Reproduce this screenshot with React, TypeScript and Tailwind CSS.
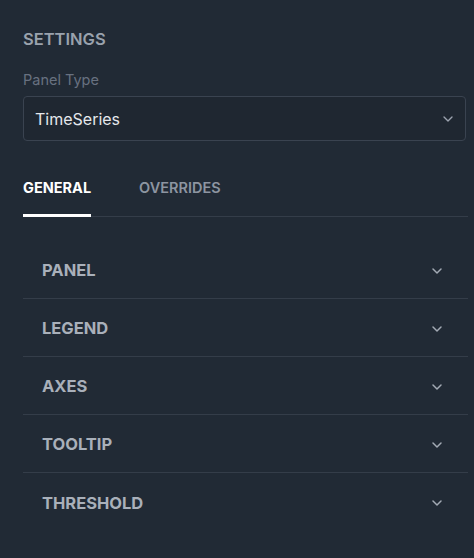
import { useState } from 'react';
import { ChevronDown } from 'lucide-react';

const sections = ['PANEL', 'LEGEND', 'AXES', 'TOOLTIP', 'THRESHOLD'];

export default function App() {
  const [tab, setTab] = useState<'general' | 'overrides'>('general');

  return (
    <div className="min-h-[558px] w-[474px] bg-[#212a35] pl-[23px] pr-[6px] pt-[29px] font-['Inter',sans-serif]">
      <h2 className="text-[16.5px] leading-5 font-semibold text-[#9aa2ad]">SETTINGS</h2>

      <label className="mt-[21px] block text-[14.5px] leading-5 text-[#687180]">Panel Type</label>
      <button className="mt-[6px] mr-[2px] flex h-[45px] w-[443px] items-center justify-between rounded-[4px] border border-[#3a4350] bg-[#1f2731] pl-[11px] pr-[9px] text-[16px] text-[#e5e8ec]">
        <span>TimeSeries</span>
        <ChevronDown size={16} strokeWidth={2} className="text-[#9ca3af]" />
      </button>

      <div className="mt-[37px] flex gap-[48px] border-b border-[#343d49]">
        <button
          onClick={() => setTab('general')}
          className={`-mb-px border-b-[3px] pb-[16px] text-[14.5px] leading-5 font-bold ${tab === 'general' ? 'border-white text-white' : 'border-transparent text-[#8d95a1]'}`}
        >
          GENERAL
        </button>
        <button
          onClick={() => setTab('overrides')}
          className={`-mb-px border-b-[3px] pb-[16px] text-[14.5px] leading-5 font-semibold ${tab === 'overrides' ? 'border-white text-white' : 'border-transparent text-[#8d95a1]'}`}
        >
          OVERRIDES
        </button>
      </div>

      <div className="mt-[24px]">
        {sections.map((s, i) => (
          <div
            key={s}
            className={`flex h-[58px] items-center justify-between pt-[2px] pl-[19px] pr-[23px] ${i < sections.length - 1 ? 'border-b border-[#343d49]' : ''}`}
          >
            <span className="text-[16.5px] font-bold text-[#a9b0ba]">{s}</span>
            <ChevronDown size={16} strokeWidth={2.25} className="text-[#a3aab4]" />
          </div>
        ))}
      </div>
    </div>
  );
}
